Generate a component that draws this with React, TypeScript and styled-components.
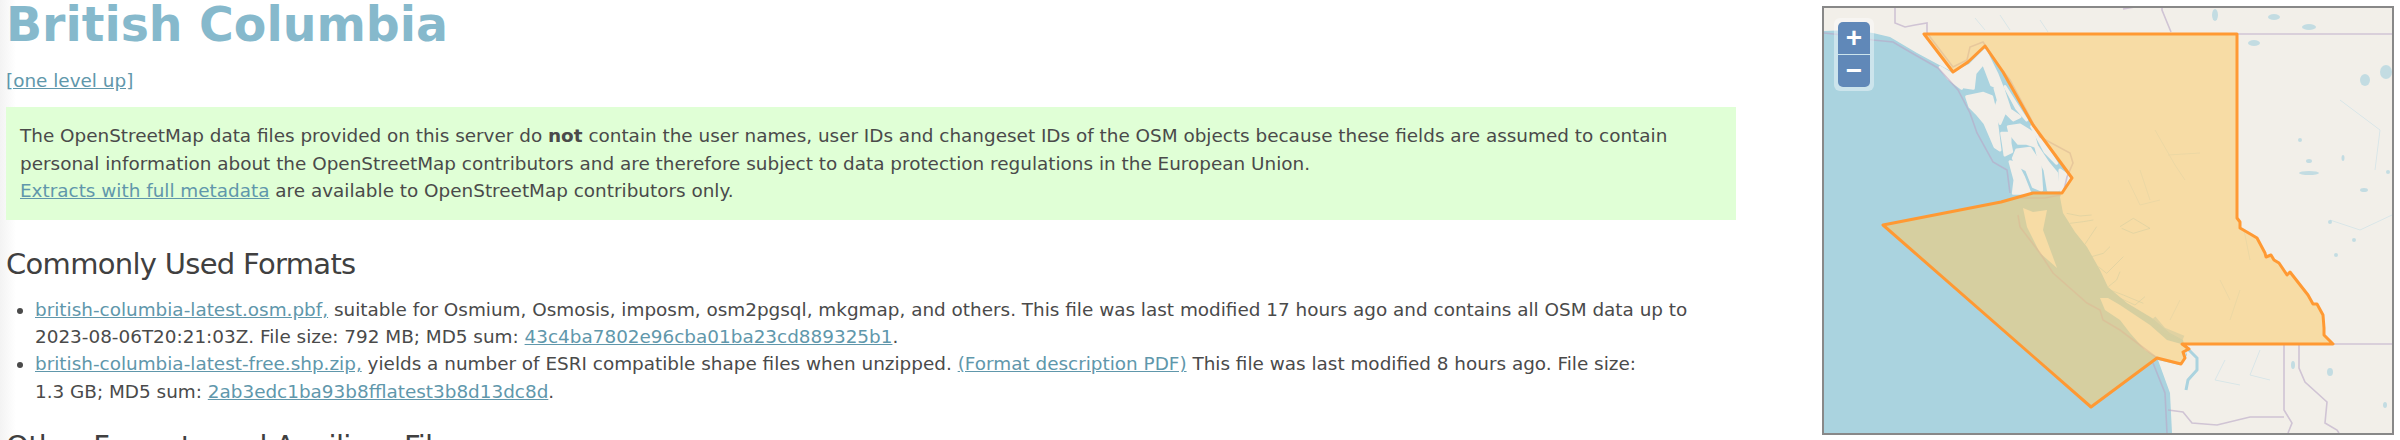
import React from "react";
import styled, { createGlobalStyle } from "styled-components";

const GlobalStyle = createGlobalStyle`
  html, body {
    margin: 0;
    padding: 0;
    height: 440px;
    overflow: hidden;
    background: #fff;
  }
  body {
    font-family: "DejaVu Sans", Verdana, sans-serif;
    font-size: 18.4px;
    line-height: 27.4px;
    color: #4a4a4a;
  }
  a {
    color: #6097ab;
  }
`;

const BORDER_POINTS =
  "1924,34 2237,34 2237,218 2240,222 2240,228 2252,235 2257,238 2265,253 2266,257 2271,255 2274,260 2279,263 2287,275 2290,272 2308,295 2313,304 2317,304 2323,315 2324,328 2324,335 2333,344 2182,344 2189,349 2183,352 2185,358 2181,364 2157,358 2091,407 1883,225 2001,202 2033,193 2062,193 2072,178 2033,125 2003,72 1985,46 1968,62 1953,72";

const WATER_POINTS =
  "1824,31 1850,30 1873,33 1890,37 1917,53 1943,67 1953,72 1968,62 1985,46 2003,72 2033,125 2072,178 2062,193 2060,197 2063,213 2075,232 2087,247 2100,270 2108,287 2127,303 2152,318 2170,333 2183,340 2187,355 2180,365 2158,360 2170,393 2172,433 1824,433";

const VANCOUVER_ISLAND =
  "2100,298 2108,298 2120,305 2150,325 2167,340 2185,345 2186,360 2180,364 2157,357 2145,350 2130,333 2120,320 2105,310";
const HAIDA_GWAII = "2023,208 2033,212 2047,210 2043,230 2057,268 2040,253 2027,227";

// fjord islands, in the 3x coordinates of the coast crop
const FJORD_ISLANDS = [
  "100,130 150,105 195,60 230,130 250,180 215,165 190,100 165,130 160,175 130,170 100,150",
  "60,112 100,135 125,175 112,165 85,145",
  "140,200 190,190 215,200 225,240 240,360 225,350 195,280 170,250 150,230",
  "225,175 250,180 270,240 300,260 280,270 255,245 240,280 225,240 235,210",
  "265,290 300,285 340,310 350,350 320,340 295,340 270,310",
  "245,310 270,310 270,340 275,365 255,375 250,340",
  "290,360 330,355 360,400 365,480 340,470 320,420 290,405 280,385",
  "270,395 290,400 310,440 330,490 280,490 285,450",
  "345,340 385,400 410,430 415,480 385,480 375,420 355,380",
  "420,420 455,445 425,490 420,470",
  "255,170 300,240 320,270 290,235",
  "335,290 370,335 410,400 375,365",
];

// coastal inlets and rivers south of the line, in the 3x coordinates of the strait crop
const INLETS = [
  "140,70 180,78 215,75",
  "150,100 190,95 220,90",
  "190,170 210,140 230,110",
  "235,230 260,250 285,225 310,200",
  "270,300 310,315 370,340",
  "290,320 345,345 375,320",
  "300,110 340,85 390,115 340,130 305,115",
  "265,290 290,270 300,245",
  "215,200 250,190 270,170",
];
const SOUND = "400,385 430,420 490,445";

const BOUNDARIES = [
  "1895,7 1895,23 1905,27 1915,25 1927,23 1927,33",
  "1824,33 1843,35 1873,40 1893,42 1910,52 1938,68 1958,90 1970,113 1977,133 1993,162 2007,170 2010,193",
  "1927,33 1953,67 1967,60 1970,47 1983,42 2000,67 2010,80 2030,117 2040,137 2070,153 2073,163 2067,177 2064,190",
  "2020,198 2045,198 2060,195",
  "2018,215 2020,227 2040,253 2053,273 2087,303 2100,310 2103,320 2120,330 2157,358",
  "2153,363 2165,393 2167,433",
  "2162,7 2162,10 2171,32",
  "2237,34 2392,34",
  "2333,344 2392,344",
  "2284,344 2284,410 2292,423 2288,433",
  "2299,344 2299,368 2305,382 2327,402 2325,423 2337,430 2339,433",
  "2168,410 2183,412 2192,423 2217,425 2250,417 2284,417",
  "2123,9 2135,7",
];

const RIVERS = [
  "2155,130 2175,165 2185,180",
  "2168,155 2200,153",
  "2140,170 2150,200",
  "2128,180 2140,205 2160,200",
  "2244,230 2250,260",
  "2220,280 2230,300",
  "2170,320 2180,300",
  "2230,320 2240,290",
  "2040,20 2048,32",
  "2000,15 2010,30",
  "1975,18 1985,30",
  "2340,100 2380,130 2375,170",
  "2330,220 2360,230 2392,215",
  "2225,360 2215,380 2240,385",
  "2260,350 2250,375 2270,380",
];

const LAKES = [
  [2215, 15, 3, 6],
  [2274, 17, 6, 3],
  [2309, 27, 7, 3],
  [2254, 43, 6, 3],
  [2386, 72, 6, 7],
  [2365, 80, 5, 6],
  [2309, 173, 10, 2],
  [2309, 161, 3, 2],
  [2364, 190, 4, 2],
  [2293, 365, 2, 4],
  [2330, 372, 3, 4],
  [2300, 140, 2, 2],
  [2343, 158, 1.5, 3],
  [2388, 172, 2, 2],
  [2330, 222, 2, 2],
  [2354, 240, 2, 2],
  [2336, 255, 2, 2],
  [2385, 405, 2, 3],
];

const App = () => {
  return (
    <Page>
      <GlobalStyle />
      <Main>
        <Title>British Columbia</Title>
        <UpLink href="#">[one level up]</UpLink>
        <Notice>
          The OpenStreetMap data files provided on this server do <b>not</b> contain the user
          names, user IDs and changeset IDs of the OSM objects because these fields are assumed to
          contain personal information about the OpenStreetMap contributors and are therefore
          subject to data protection regulations in the European Union.
          <br />
          <a href="#">Extracts with full metadata</a> are available to OpenStreetMap contributors
          only.
        </Notice>
        <Heading>Commonly Used Formats</Heading>
        <Formats>
          <li>
            <a href="#">british-columbia-latest.osm.pbf,</a> suitable for Osmium, Osmosis, imposm,
            osm2pgsql, mkgmap, and others. This file was last modified 17 hours ago and contains
            all OSM data up to 2023-08-06T20:21:03Z. File size: 792 MB; MD5 sum:{" "}
            <a href="#">43c4ba7802e96cba01ba23cd889325b1</a>.
          </li>
          <li>
            <a href="#">british-columbia-latest-free.shp.zip,</a> yields a number of ESRI
            compatible shape files when unzipped. <a href="#">(Format description PDF)</a> This
            file was last modified 8 hours ago. File size:
            <br />
            1.3 GB; MD5 sum: <a href="#">2ab3edc1ba93b8fflatest3b8d13dc8d</a>.
          </li>
        </Formats>
        <NextHeading>Other Formats and Auxiliary Files</NextHeading>
      </Main>
      <MapFrame>
        <MapSvg viewBox="1824 8 568 425">
          <defs>
            <filter id="soft">
              <feGaussianBlur stdDeviation="0.7" />
            </filter>
          </defs>
          <rect x="1824" y="8" width="568" height="425" fill="#f2efe9" />
          <g filter="url(#soft)">
            <g fill="none" stroke="#d9e6e8" strokeWidth="1">
              {RIVERS.map((points) => (
                <polyline key={points} points={points} />
              ))}
            </g>
            <g fill="#aad3df" fillOpacity="0.65">
              {LAKES.map(([cx, cy, rx, ry]) => (
                <ellipse key={`${cx}-${cy}`} cx={cx} cy={cy} rx={rx} ry={ry} />
              ))}
            </g>
            <polygon points={WATER_POINTS} fill="#aad3df" />
            <g
              transform="translate(1920 30) scale(0.3333)"
              fill="#f2efe9"
              stroke="#f2efe9"
              strokeWidth="9"
              strokeLinejoin="round"
            >
              {FJORD_ISLANDS.map((points) => (
                <polygon key={points} points={points} />
              ))}
            </g>
            <polygon points={VANCOUVER_ISLAND} fill="#f2efe9" />
            <polygon points={HAIDA_GWAII} fill="#f2efe9" />
            <g transform="translate(2020 190) scale(0.3333)" fill="none" stroke="#aad3df">
              <g strokeWidth="3" strokeOpacity="0.6">
                {INLETS.map((points) => (
                  <polyline key={points} points={points} />
                ))}
              </g>
              <polyline points={SOUND} strokeWidth="16" strokeOpacity="0.7" />
            </g>
            <polyline
              points="2186,347 2197,358 2197,370 2188,380 2186,390"
              fill="none"
              stroke="#aad3df"
              strokeWidth="3"
            />
            <g fill="none" stroke="#b9a7c6" strokeOpacity="0.6" strokeWidth="1.6">
              {BOUNDARIES.map((points) => (
                <polyline key={points} points={points} />
              ))}
            </g>
          </g>
          <polygon
            points={BORDER_POINTS}
            fill="#fccc6c"
            fillOpacity="0.54"
            stroke="#ff9933"
            strokeWidth="3"
            strokeLinejoin="round"
          />
        </MapSvg>
        <ZoomControl>
          <ZoomButton>+</ZoomButton>
          <ZoomButton>−</ZoomButton>
        </ZoomControl>
      </MapFrame>
    </Page>
  );
};

export default App;

const Page = styled.div`
  display: flex;
  align-items: flex-start;
  height: 440px;
  overflow: hidden;
  background: linear-gradient(to right, #f3f3f3, #fff 16px);
`;
const Main = styled.div`
  width: 1730px;
  margin-left: 6px;
  flex-shrink: 0;
`;
const Title = styled.h1`
  margin: -5px 0 0;
  font-size: 47.4px;
  line-height: 60px;
  font-weight: bold;
  color: #86b9cc;
`;
const UpLink = styled.a`
  display: block;
  margin-top: 12px;
`;
const Notice = styled.div`
  margin-top: 13px;
  padding: 15px 14px;
  background: #e0ffd6;
`;
const Heading = styled.h2`
  margin: 24px 0 0;
  font-size: 29px;
  line-height: 40px;
  font-weight: normal;
  letter-spacing: -0.7px;
  color: #404040;
`;
const NextHeading = styled(Heading)`
  margin-top: 21px;
`;
const Formats = styled.ul`
  margin: 12px 0 0;
  padding-left: 29px;
`;
const MapFrame = styled.div`
  position: relative;
  width: 568px;
  height: 425px;
  margin: 6px 0 0 86px;
  border: 2px solid #888;
  flex-shrink: 0;
`;
const MapSvg = styled.svg`
  display: block;
  width: 100%;
  height: 100%;
`;
const ZoomControl = styled.div`
  position: absolute;
  top: 10px;
  left: 10px;
  padding: 4px;
  border-radius: 6px;
  background: rgba(255, 255, 255, 0.4);
`;
const ZoomButton = styled.div`
  width: 32px;
  height: 32px;
  display: flex;
  align-items: center;
  justify-content: center;
  background: #6088b8;
  color: #fff;
  font-family: "Liberation Sans", Arial, sans-serif;
  font-size: 28px;
  line-height: 32px;
  font-weight: bold;
  &:first-child {
    border-radius: 5px 5px 0 0;
  }
  &:last-child {
    margin-top: 1px;
    border-radius: 0 0 5px 5px;
  }
`;
